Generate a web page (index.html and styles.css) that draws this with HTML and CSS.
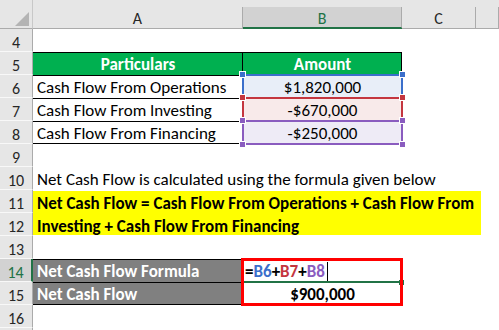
FILE: index.html
```html
<!DOCTYPE html>
<html>
<head>
<meta charset="utf-8">
<link rel="stylesheet" href="styles.css">
</head>
<body>
<div class="sheet">
  <div class="corner"><svg width="33" height="29" viewBox="0 0 33 29"><polygon points="29,12 29,26 15,26" fill="#b4b4b4"/></svg></div>
  <div class="ch"><span>A</span></div>
  <div class="ch sel"><span>B</span></div>
  <div class="ch"><span>C</span></div>
  <div class="ch"><span></span></div>

  <div class="rh">4</div><div></div><div></div><div></div><div></div>

  <div class="rh">5</div>
  <div class="c tb th">Particulars</div>
  <div class="c tb th tr">Amount</div>
  <div></div><div></div>

  <div class="rh">6</div>
  <div class="c tb">Cash Flow From Operations</div>
  <div class="c ref blue">$1,820,000<i class="hl"></i><b class="hd tl"></b><b class="hd tr2"></b><b class="hd bl"></b><b class="hd br"></b></div>
  <div></div><div></div>

  <div class="rh">7</div>
  <div class="c tb">Cash Flow From Investing</div>
  <div class="c ref red">-$670,000<i class="hl"></i><b class="hd tl"></b><b class="hd tr2"></b><b class="hd bl"></b><b class="hd br"></b></div>
  <div></div><div></div>

  <div class="rh">8</div>
  <div class="c tb tbb">Cash Flow From Financing</div>
  <div class="c ref purple">-$250,000<i class="hl"></i><b class="hd tl"></b><b class="hd tr2"></b><b class="hd bl"></b><b class="hd br"></b></div>
  <div></div><div></div>

  <div class="rh">9</div><div></div><div></div><div></div><div></div>

  <div class="rh">10</div>
  <div class="c wide">Net Cash Flow is calculated using the formula given below</div>

  <div class="rh">11</div>
  <div class="c note"><div class="yellow">Net Cash Flow = Cash Flow From Operations + Cash Flow From<br>Investing + Cash Flow From Financing</div></div>
  <div class="rh">12</div>

  <div class="rh">13</div><div></div><div></div><div></div><div></div>

  <div class="rh sel">14</div>
  <div class="c tb gray">Net Cash Flow Formula</div>
  <div class="c formula"><span>=</span><span class="fb">B6</span><span>+</span><span class="fr">B7</span><span>+</span><span class="fp">B8</span><span class="cur"></span><i class="active"></i><i class="fill"></i><i class="redbox"></i></div>
  <div></div><div></div>

  <div class="rh">15</div>
  <div class="c tb tbb gray">Net Cash Flow</div>
  <div class="c result">$900,000</div>
  <div></div><div></div>

  <div class="rh">16</div><div></div><div></div><div></div><div></div>
  <div class="rh"></div><div></div><div></div><div></div><div></div>
</div>
</body>
</html>
```

FILE: styles.css
```css
html, body {
  margin: 0;
  padding: 0;
}
body {
  width: 499px;
  height: 330px;
  overflow: hidden;
  background: #fff;
  font-family: "Carlito", "Lato", sans-serif;
  font-size: 17px;
  color: #000;
}
.sheet {
  display: grid;
  grid-template-columns: 33px 210px 159px 74px 23px;
  grid-template-rows: 29px;
  grid-auto-rows: 23px;
  height: 330px;
  overflow: hidden;
}
.corner {
  background: #e6e6e6;
  border-bottom: 1px solid #ababab;
  border-right: 1px solid #c8c8c8;
  box-sizing: border-box;
  overflow: hidden;
}
.corner svg { display: block; }
.ch {
  background: #e6e6e6;
  padding-top: 7px;
  border-bottom: 1px solid #ababab;
  box-sizing: border-box;
}
.ch span {
  display: block;
  height: 21px;
  line-height: 23px;
  text-align: center;
  font-size: 16px;
  color: #262626;
  border-right: 1px solid #ababab;
  overflow: hidden;
}
.ch.sel { border-bottom-color: #217346; }
.ch.sel span {
  background: #d2d2d2;
  color: #217346;
  height: 20px;
  border-bottom: 1px solid #217346;
}
.rh {
  background: #e6e6e6;
  border-bottom: 1px solid #f8f8f8;
  border-right: 1px solid #ababab;
  box-sizing: border-box;
  text-align: center;
  font-size: 16px;
  line-height: 27px;
  color: #262626;
  overflow: hidden;
}
.rh.sel {
  background: #d2d2d2;
  color: #217346;
  border-right: 2px solid #217346;
}
.c {
  padding: 0 4px;
  line-height: 26px;
  white-space: nowrap;
  position: relative;
}
.tb { box-shadow: inset 0 1px 0 #000, inset -1px 0 0 #000; }
.tb.tbb { box-shadow: inset 0 1px 0 #000, inset -1px 0 0 #000, inset 0 -1px 0 #000; }
.th {
  background: #00b050;
  color: #fff;
  font-weight: bold;
  text-align: center;
}
.gray {
  background: #808080;
  color: #fff;
  font-weight: bold;
}
.ref {
  text-align: center;
}
.blue { background: #e8eef8; --rc: #3b6fcb; }
.red { background: #f8eaea; --rc: #c4363f; }
.purple { background: #eeebf6; --rc: #8a5cbf; }
.hl {
  position: absolute;
  left: -1px;
  top: -1px;
  right: -1px;
  bottom: -1px;
  border: 2px solid var(--rc);
}
.hd {
  position: absolute;
  width: 5px;
  height: 5px;
  background: var(--rc);
  border: 1px solid #fff;
}
.hd.tl { left: -4px; top: -4px; }
.hd.tr2 { right: -4px; top: -4px; }
.hd.bl { left: -4px; bottom: -4px; }
.hd.br { right: -4px; bottom: -4px; }
.wide { grid-column: span 4; }
.note {
  grid-column: span 4;
  grid-row: span 2;
  padding: 0;
}
.yellow {
  width: 440px;
  padding: 0 4px;
  font-weight: bold;
  line-height: 23px;
  padding-top: 2px;
  height: 44px;
  background: linear-gradient(#ffff00, #ffff00) 0 1px / 100% 44px no-repeat;
}
.formula {
  font-weight: bold;
  padding-left: 2px;
}
.fb { color: #3b6fcb; }
.fr { color: #c4363f; }
.fp { color: #8a5cbf; }
.cur {
  display: inline-block;
  width: 1px;
  height: 19px;
  background: #000;
  margin-left: 2px;
  vertical-align: -4px;
}
.active {
  position: absolute;
  left: 1px;
  right: 2px;
  bottom: -1px;
  height: 2px;
  background: #217346;
}
.fill {
  position: absolute;
  right: -2px;
  bottom: -3px;
  width: 5px;
  height: 5px;
  background: #217346;
}
.redbox {
  position: absolute;
  left: -2px;
  top: -1px;
  width: 162px;
  height: 48px;
  border: 3px solid #ff0000;
  box-sizing: border-box;
  z-index: 2;
}
.result {
  font-weight: bold;
  text-align: center;
}
```
